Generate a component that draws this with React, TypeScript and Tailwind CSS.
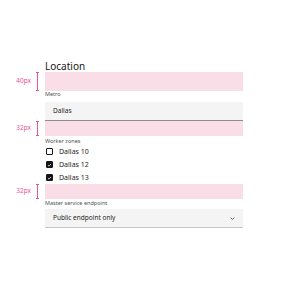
const font = { fontFamily: '"Noto Sans", "Liberation Sans", sans-serif' };

function Spacer({ h, label }: { h: string; label: string }) {
  return (
    <div className={`relative ${h} bg-[#f9dde7]`}>
      <div className="absolute right-full top-0 bottom-0 mr-[6px] flex items-center gap-[5px]">
        <span className="text-[6.5px] leading-none text-[#ee5396]">{label}</span>
        <div className="flex h-full w-[3px] flex-col items-center justify-between">
          <div className="h-px w-[3px] bg-[#ee5396]" />
          <div className="w-px flex-1 bg-[#ee5396]" />
          <div className="h-px w-[3px] bg-[#ee5396]" />
        </div>
      </div>
    </div>
  );
}

function Check({ label, checked }: { label: string; checked: boolean }) {
  return (
    <div className="flex h-[13px] items-center gap-[6px]">
      <div
        className={`ml-[1px] flex h-[7px] w-[7px] items-center justify-center rounded-[1px] border border-[#161616] ${
          checked ? 'bg-[#161616]' : 'bg-white'
        }`}
      >
        {checked && (
          <svg viewBox="0 0 8 8" className="h-[6px] w-[6px]">
            <path d="M1.5 4.2 L3.2 5.8 L6.5 2.3" fill="none" stroke="white" strokeWidth="1.2" />
          </svg>
        )}
      </div>
      <span className="text-[7px] leading-none text-[#262626]">{label}</span>
    </div>
  );
}

export default function App() {
  return (
    <div className="h-[288px] w-[288px] bg-white" style={font}>
      <div className="ml-[45px] w-[198px] pt-[60px]">
        <div className="text-[10px] leading-[12px] text-[#161616]">Location</div>
        <Spacer h="h-[19px]" label="40px" />
        <div className="text-[5.5px] leading-[6px] text-[#525252]">Metro</div>
        <div className="mt-[5px] flex h-[19px] items-center border-b border-[#8d8d8d] bg-[#f4f4f4] px-[8px]">
          <span className="text-[6.5px] text-[#262626]">Dallas</span>
        </div>
        <Spacer h="h-[15px]" label="32px" />
        <div className="mt-[2px] text-[5.5px] leading-[6px] text-[#525252]">Worker zones</div>
        <div className="mt-[1px] flex flex-col">
          <Check label="Dallas 10" checked={false} />
          <Check label="Dallas 12" checked />
          <Check label="Dallas 13" checked />
        </div>
        <Spacer h="h-[15px]" label="32px" />
        <div className="mt-[1px] text-[5.5px] leading-[6px] text-[#525252]">Master service endpoint</div>
        <div className="mt-[3px] flex h-[19px] items-center justify-between border-b border-[#c6c6c6] bg-[#f4f4f4] px-[8px]">
          <span className="text-[6.5px] text-[#262626]">Public endpoint only</span>
          <svg viewBox="0 0 8 8" className="h-[5px] w-[5px]">
            <path d="M1 2.5 L4 5.5 L7 2.5" fill="none" stroke="#161616" strokeWidth="1" />
          </svg>
        </div>
      </div>
    </div>
  );
}
